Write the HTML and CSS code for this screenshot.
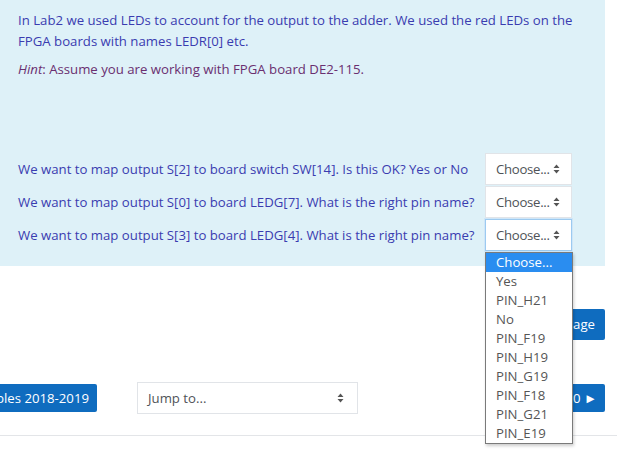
FILE: index.html
```html
<!DOCTYPE html>
<html>
<head>
<meta charset="utf-8">
<link rel="stylesheet" href="styles.css">
</head>
<body>
<div class="page">
  <div class="formulation">
    <p class="intro">In Lab2 we used LEDs to account for the output to the adder. We used the red LEDs on the FPGA boards with names LEDR[0] etc.</p>
    <p class="hint"><em>Hint</em>: Assume you are working with FPGA board DE2-115.</p>
    <div class="rows">
      <div class="row">
        <span class="qtext">We want to map output S[2] to board switch SW[14]. Is this OK? Yes or No</span>
        <div class="sel"><span>Choose...</span><svg class="updown" width="7" height="10" viewBox="0 0 7 10"><path d="M3.5 0.5 L6.5 4 H0.5 Z M3.5 9.5 L6.5 6 H0.5 Z" fill="#555"/></svg></div>
      </div>
      <div class="row">
        <span class="qtext">We want to map output S[0] to board LEDG[7]. What is the right pin name?</span>
        <div class="sel"><span>Choose...</span><svg class="updown" width="7" height="10" viewBox="0 0 7 10"><path d="M3.5 0.5 L6.5 4 H0.5 Z M3.5 9.5 L6.5 6 H0.5 Z" fill="#555"/></svg></div>
      </div>
      <div class="row">
        <span class="qtext">We want to map output S[3] to board LEDG[4]. What is the right pin name?</span>
        <div class="sel focus"><span>Choose...</span><svg class="updown" width="7" height="10" viewBox="0 0 7 10"><path d="M3.5 0.5 L6.5 4 H0.5 Z M3.5 9.5 L6.5 6 H0.5 Z" fill="#555"/></svg></div>
      </div>
    </div>
  </div>

  <div class="nextrow">
    <div class="btn">Next page</div>
  </div>

  <div class="navrow">
    <div class="prevwrap"><div class="btn prev">◄ Examples 2018-2019</div></div>
    <div class="jump"><span>Jump to...</span><svg class="updown" width="7" height="10" viewBox="0 0 7 10"><path d="M3.5 0.5 L6.5 4 H0.5 Z M3.5 9.5 L6.5 6 H0.5 Z" fill="#555"/></svg></div>
    <div class="btn next">Lab 50 ►</div>
  </div>
  <hr class="rule">

  <ul class="dropdown">
    <li class="active">Choose...</li>
    <li>Yes</li>
    <li>PIN_H21</li>
    <li>No</li>
    <li>PIN_F19</li>
    <li>PIN_H19</li>
    <li>PIN_G19</li>
    <li>PIN_F18</li>
    <li>PIN_G21</li>
    <li>PIN_E19</li>
  </ul>
</div>
</body>
</html>
```

FILE: styles.css
```css
html, body {
  margin: 0;
  padding: 0;
  background: #fff;
  overflow: hidden;
}
body {
  font-family: "Open Sans", "Noto Sans", sans-serif;
  font-size: 13.2px;
  color: #3b3fae;
}
.page {
  position: relative;
  width: 617px;
  height: 450px;
}
.formulation {
  width: 605px;
  box-sizing: border-box;
  background: #def1f8;
  padding: 10px 18px 15px 18px;
}
.formulation p {
  margin: 0;
  line-height: 21px;
}
.intro {
  color: #3a3cb0;
}
.hint {
  margin-top: 7px !important;
  color: #6a2f70;
}
.rows {
  margin-top: 73px;
  margin-right: 15px;
  display: flex;
  flex-direction: column;
  gap: 1px;
}
.row {
  display: flex;
  justify-content: space-between;
  align-items: center;
  height: 32px;
}
.qtext {
  color: #3a3cb0;
  white-space: nowrap;
}
.sel, .jump {
  box-sizing: border-box;
  background: #fff;
  border: 1px solid #e1e4e8;
  height: 32px;
  display: flex;
  align-items: center;
  justify-content: space-between;
  padding: 0 11px 0 10px;
  color: #4f5357;
  font-size: 13.2px;
}
.sel span {
  letter-spacing: -0.3px;
}
.sel {
  width: 87px;
  flex: none;
}
.sel.focus {
  border-color: #9ccaf0;
  box-shadow: 0 0 0 1px #cfe6f8;
}
.updown {
  flex: none;
}
.nextrow {
  display: flex;
  justify-content: flex-end;
  width: 605px;
  margin-top: 43px;
}
.btn {
  background: #0f6cbf;
  color: #fff;
  font-size: 13.2px;
  height: 31px;
  line-height: 31px;
  padding: 0 10px;
  border-radius: 2px;
  white-space: nowrap;
}
.navrow {
  display: flex;
  align-items: center;
  width: 605px;
  margin-top: 42px;
  height: 32px;
}
.prevwrap {
  flex: none;
  width: 97px;
  display: flex;
  justify-content: flex-end;
}
.btn.prev {
  flex: none;
  height: 28px;
  line-height: 28px;
  padding-right: 8px;
}
.jump {
  flex: none;
  width: 221px;
  margin-left: 40px;
  padding-right: 13px;
}
.btn.next {
  margin-left: auto;
  height: 28px;
  line-height: 28px;
  padding-right: 8px;
}
.rule {
  margin: 21px 0 0 0;
  border: 0;
  border-top: 1px solid #e3e5e8;
  width: 617px;
}
.dropdown {
  position: absolute;
  left: 485px;
  top: 252px;
  width: 88px;
  box-sizing: border-box;
  margin: 0;
  padding: 0;
  list-style: none;
  background: #fff;
  border: 1px solid #7a7a7a;
  box-shadow: 1px 2px 3px rgba(0,0,0,0.2);
}
.dropdown li {
  height: 19px;
  line-height: 19px;
  padding-left: 10px;
  color: #555;
  font-size: 13.2px;
}
.dropdown li.active {
  background: #2a8df0;
  color: #fff;
}
```
